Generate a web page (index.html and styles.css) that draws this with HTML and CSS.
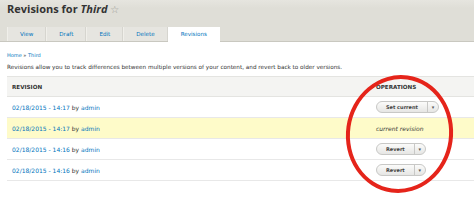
FILE: index.html
```html
<!DOCTYPE html>
<html lang="en">
<head>
  <meta charset="UTF-8">
  <title>Revisions for Third</title>
  <link rel="stylesheet" href="styles.css">
</head>
<body>
  <header class="page-head">
    <h1 class="page-title">Revisions for <em>Third</em> <span class="star">&#9734;</span></h1>
    <nav class="tabs">
      <a class="tab" href="#">View</a>
      <a class="tab" href="#">Draft</a>
      <a class="tab" href="#">Edit</a>
      <a class="tab" href="#">Delete</a>
      <a class="tab active" href="#">Revisions</a>
    </nav>
  </header>

  <main class="content">
    <div class="breadcrumb"><a href="#">Home</a> &raquo; <a href="#">Third</a></div>
    <p class="intro">Revisions allow you to track differences between multiple versions of your content, and revert back to older versions.</p>

    <table class="revisions">
      <thead>
        <tr>
          <th>Revision</th>
          <th class="ops">Operations</th>
        </tr>
      </thead>
      <tbody>
        <tr>
          <td><a href="#">02/18/2015 - 14:17</a> by <a href="#">admin</a></td>
          <td class="ops">
            <span class="split-btn"><span class="btn-main">Set current</span><span class="btn-arrow">&#9662;</span></span>
          </td>
        </tr>
        <tr class="current">
          <td><a href="#">02/18/2015 - 14:17</a> by <a href="#">admin</a></td>
          <td class="ops"><em>current revision</em></td>
        </tr>
        <tr>
          <td><a href="#">02/18/2015 - 14:16</a> by <a href="#">admin</a></td>
          <td class="ops">
            <span class="split-btn"><span class="btn-main">Revert</span><span class="btn-arrow">&#9662;</span></span>
          </td>
        </tr>
        <tr>
          <td><a href="#">02/18/2015 - 14:16</a> by <a href="#">admin</a></td>
          <td class="ops">
            <span class="split-btn"><span class="btn-main">Revert</span><span class="btn-arrow">&#9662;</span></span>
          </td>
        </tr>
      </tbody>
    </table>
  </main>

  <div class="ring"></div>
</body>
</html>
```

FILE: styles.css
```css
body {
  margin: 0;
  font-family: "DejaVu Sans", sans-serif;
  color: #333;
  background: #fff;
  overflow: hidden;
}
a {
  color: #0074bd;
  text-decoration: none;
}
.page-head {
  background: linear-gradient(#e6e5df, #dfded7 8px);
  border-bottom: 1px solid #c9c8c0;
  height: 41px;
  display: flex;
  flex-direction: column;
  justify-content: space-between;
}
.page-title {
  margin: 0;
  padding: 3px 0 0 7px;
  font-family: "Open Sans", sans-serif;
  font-size: 11px;
  font-weight: 700;
  line-height: 12px;
  color: #333;
}
.page-title em {
  font-style: italic;
}
.star {
  font-family: "DejaVu Sans", sans-serif;
  font-weight: 400;
  color: #9a9a94;
  font-size: 10px;
}
.tabs {
  display: flex;
  padding-left: 7px;
}
.tab {
  height: 14px;
  line-height: 14px;
  padding: 0 12px;
  font-size: 5.6px;
  background: #e6e5e0;
  border-left: 1px solid #f0efea;
  border-right: 1px solid #d6d5cf;
}
.tab.active {
  background: #fff;
  height: 15px;
  margin-bottom: -1px;
  border-color: #fff;
}
.content {
  padding-left: 7px;
}
.breadcrumb {
  margin-top: 10px;
  font-size: 5px;
  line-height: 7px;
}
.intro {
  margin: 5px 0 0;
  font-size: 5.7px;
  line-height: 7px;
}
.revisions {
  margin-top: 5px;
  width: 467px;
  border-collapse: collapse;
  font-size: 6px;
}
.revisions th {
  background: #f4f4f2;
  border-top: 1px solid #e4e4e1;
  border-bottom: 1px solid #e4e4e1;
  height: 19px;
  padding: 0 5px;
  text-align: left;
  text-transform: uppercase;
  font-weight: 700;
  font-size: 5.6px;
  color: #333;
}
.revisions td {
  height: 20px;
  padding: 0 5px;
  border-bottom: 1px solid #e8e8e8;
}
.revisions .ops {
  width: 93px;
}
.revisions tr.current td {
  background: #fefbc9;
}
.split-btn {
  display: inline-flex;
  height: 10px;
  border: 1px solid #c8c8c6;
  border-radius: 6px;
  background: linear-gradient(#fbfbfa, #e6e6e4);
  font-weight: 700;
  font-size: 5px;
  color: #444;
  line-height: 10px;
  overflow: hidden;
  vertical-align: middle;
}
.btn-main {
  padding: 0 9px;
}
.btn-arrow {
  width: 10px;
  text-align: center;
  border-left: 1px solid #c8c8c6;
  font-size: 5px;
  color: #555;
}
.ring {
  position: absolute;
  left: 346px;
  top: 75px;
  width: 99px;
  height: 110px;
  border: 4px solid #e5241a;
  border-radius: 50%;
  transform: rotate(8deg);
}
```
